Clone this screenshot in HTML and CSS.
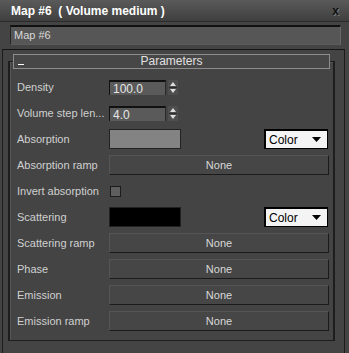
FILE: index.html
```html
<!DOCTYPE html>
<html lang="en">
<head>
  <meta charset="UTF-8">
  <title>Map #6 ( Volume medium )</title>
  <link rel="stylesheet" href="styles.css">
</head>
<body>

  <div class="window">

    <div class="titlebar">
      <span class="title">Map #6&nbsp; ( Volume medium )</span>
      <span class="close">x</span>
    </div>

    <div class="namefield">Map #6</div>

    <div class="scroller">
      <div class="rollout">
        <div class="rollout-head"><span class="dash"></span>Parameters</div>

        <div class="row">
          <span class="label">Density</span>
          <div class="spinner">
            <span class="field">100.0</span>
            <svg class="arrows" width="10" height="15" viewBox="0 0 10 15">
              <path d="M5 2 L8 6 L2 6 Z" fill="#ddd"/>
              <line x1="1" y1="7.5" x2="9" y2="7.5" stroke="#2a2a2a"/>
              <path d="M5 13 L8 9 L2 9 Z" fill="#ddd"/>
            </svg>
          </div>
        </div>

        <div class="row">
          <span class="label">Volume step len...</span>
          <div class="spinner">
            <span class="field">4.0</span>
            <svg class="arrows" width="10" height="15" viewBox="0 0 10 15">
              <path d="M5 2 L8 6 L2 6 Z" fill="#ddd"/>
              <line x1="1" y1="7.5" x2="9" y2="7.5" stroke="#2a2a2a"/>
              <path d="M5 13 L8 9 L2 9 Z" fill="#ddd"/>
            </svg>
          </div>
        </div>

        <div class="row">
          <span class="label">Absorption</span>
          <div class="color-line">
            <span class="swatch grey"></span>
            <span class="dropdown">Color
              <svg width="9" height="5" viewBox="0 0 9 5"><path d="M0 0 L9 0 L4.5 5 Z" fill="#000"/></svg>
            </span>
          </div>
        </div>

        <div class="row">
          <span class="label">Absorption ramp</span>
          <span class="mapbtn">None</span>
        </div>

        <div class="row">
          <span class="label">Invert absorption</span>
          <span class="check"></span>
        </div>

        <div class="row">
          <span class="label">Scattering</span>
          <div class="color-line">
            <span class="swatch black"></span>
            <span class="dropdown">Color
              <svg width="9" height="5" viewBox="0 0 9 5"><path d="M0 0 L9 0 L4.5 5 Z" fill="#000"/></svg>
            </span>
          </div>
        </div>

        <div class="row">
          <span class="label">Scattering ramp</span>
          <span class="mapbtn">None</span>
        </div>

        <div class="row">
          <span class="label">Phase</span>
          <span class="mapbtn">None</span>
        </div>

        <div class="row">
          <span class="label">Emission</span>
          <span class="mapbtn">None</span>
        </div>

        <div class="row">
          <span class="label">Emission ramp</span>
          <span class="mapbtn">None</span>
        </div>

      </div>
    </div>

  </div>

</body>
</html>
```

FILE: styles.css
```css
body {
  margin: 0;
  background: #444;
  font-family: "Liberation Sans", Arial, sans-serif;
  font-size: 11px;
  color: #d0d0d0;
}
.window {
  width: 349px;
  height: 353px;
  background: #444;
  overflow: hidden;
}
.titlebar {
  height: 21px;
  display: flex;
  align-items: center;
  justify-content: space-between;
  padding: 0 10px 0 11px;
  background: linear-gradient(#5a5a5a, #3f3f3f);
  border-bottom: 1px solid #2b2b2b;
}
.title {
  font-weight: bold;
  font-size: 12px;
  color: #fff;
  white-space: pre;
}
.close {
  font-weight: bold;
  font-size: 12px;
  color: #111;
  text-shadow: 1px 1px 0 #7a7a7a;
}
.namefield {
  margin: 3px 8px 0 10px;
  height: 17px;
  line-height: 17px;
  padding-left: 3px;
  background: #565656;
  border-top: 2px solid #111;
  border-left: 1px solid #252525;
  border-right: 1px solid #6a6a6a;
  border-bottom: 1px solid #5c5c5c;
  color: #d8d8d8;
}
.scroller {
  margin: 4px 4px 0 2px;
  height: 310px;
  border-top: 1px solid #151515;
  border-left: 1px solid #1c1c1c;
  border-right: 1px solid #1c1c1c;
}
.rollout {
  margin: 11px 9px 0 5px;
  padding: 0 4px 6px 7px;
  border: 1px solid #1e1e1e;
  border-left-width: 2px;
  border-right-width: 2px;
  box-shadow: inset 1px 1px 0 #555;
}
.rollout-head {
  position: relative;
  margin: -8px -1px 5px -4px;
  height: 13px;
  line-height: 13px;
  text-align: center;
  background: #474747;
  border: 1px solid #8c8c8c;
  color: #e0e0e0;
  font-size: 12px;
}
.dash {
  position: absolute;
  left: 4px;
  top: 9px;
  width: 6px;
  height: 1px;
  background: #fff;
}
.row {
  height: 26px;
  display: grid;
  grid-template-columns: 92px 1fr;
  align-items: center;
}
.label {
  white-space: nowrap;
}
.spinner {
  display: flex;
  align-items: center;
  gap: 2px;
}
.field {
  width: 52px;
  height: 13px;
  line-height: 14px;
  padding-left: 3px;
  background: #5a5a5a;
  border-top: 2px solid #111;
  border-left: 1px solid #111;
  border-right: 1px solid #2a2a2a;
  color: #e6e6e6;
  font-size: 12px;
}
.arrows {
  display: block;
  background: #4e4e4e;
}
.color-line {
  display: flex;
  justify-content: space-between;
  align-items: center;
  padding-right: 1px;
}
.swatch {
  width: 70px;
  height: 18px;
  border: 1px solid #222;
}
.grey {
  background: #838383;
}
.black {
  background: #000;
}
.dropdown {
  width: 52px;
  height: 17px;
  display: flex;
  align-items: center;
  justify-content: space-between;
  padding: 0 6px 0 3px;
  background: #f4f4f4;
  border: 1px solid #000;
  border-top-width: 2px;
  border-left-width: 2px;
  color: #000;
  font-size: 12px;
}
.mapbtn {
  height: 18px;
  line-height: 18px;
  text-align: center;
  background: #464646;
  border-top: 1px solid #555;
  border-left: 1px solid #555;
  border-right: 1px solid #1b1b1b;
  border-bottom: 1px solid #1b1b1b;
  color: #d8d8d8;
}
.check {
  width: 9px;
  height: 9px;
  margin-left: 1px;
  background: #5e5e5e;
  border: 1px solid #1c1c1c;
}
```
